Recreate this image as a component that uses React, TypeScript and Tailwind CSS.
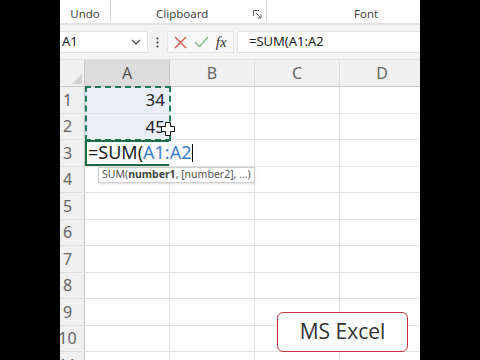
import React from 'react';

const rows = [1, 2, 3, 4, 5, 6, 7, 8, 9, 10, 11];
const cols = ['A', 'B', 'C', 'D'];

function Launcher() {
  return (
    <svg width="9" height="9" viewBox="0 0 9 9" fill="none" stroke="#666" strokeWidth="1">
      <path d="M0.5 6V0.5H6" />
      <path d="M3 3L8 8M8 4.5V8H4.5" />
    </svg>
  );
}

function PlusCursor() {
  return (
    <svg width="14" height="14" viewBox="0 0 14 14">
      <path
        d="M4.5 0.5H9.5V4.5H13.5V9.5H9.5V13.5H4.5V9.5H0.5V4.5H4.5Z"
        fill="#fff"
        stroke="#111"
        strokeWidth="1"
      />
    </svg>
  );
}

export default function App() {
  return (
    <div className="flex w-[480px] h-[360px] bg-black overflow-hidden" style={{ fontFamily: '"Noto Sans", "Open Sans", sans-serif' }}>
      <div className="w-[60px] shrink-0 bg-black" />

      <div className="relative w-[360px] shrink-0 flex flex-col bg-white overflow-hidden">
        {/* Ribbon group labels */}
        <div className="flex h-[23px] shrink-0 text-[11.5px] text-[#444] bg-white">
          <div className="w-[50px] pt-[5px] text-center">Undo</div>
          <div className="w-px h-[21px] bg-[#dadada]" />
          <div className="w-[155px] pt-[5px] flex items-start">
            <span className="ml-[45px]">Clipboard</span>
            <span className="ml-auto mr-[4px] mt-[5px] flex"><Launcher /></span>
          </div>
          <div className="w-px h-[21px] bg-[#dadada]" />
          <div className="flex-1 pt-[5px] flex items-start">
            <span className="ml-[87px]">Font</span>
          </div>
        </div>
        <div className="h-[2px] shrink-0 bg-[#e2e2e2]" />

        {/* Formula bar */}
        <div className="flex h-[35px] shrink-0 items-center bg-[#f3f3f3] border-b border-[#e0e0e0]">
          <div className="w-[88px] h-[22px] bg-white border border-l-0 border-[#e3e3e3] flex items-center pl-[2px] pr-[6px] text-[13px] text-[#222]">
            <span>A1</span>
            <svg className="ml-auto" width="10" height="6" viewBox="0 0 10 6" fill="none" stroke="#555" strokeWidth="1.3">
              <path d="M1 1L5 5L9 1" />
            </svg>
          </div>
          <div className="w-[19px] flex justify-center">
            <svg width="3" height="11" viewBox="0 0 3 11" fill="#444">
              <circle cx="1.5" cy="1.5" r="1.1" />
              <circle cx="1.5" cy="5.5" r="1.1" />
              <circle cx="1.5" cy="9.5" r="1.1" />
            </svg>
          </div>
          <div className="w-[67px] h-[22px] bg-[#f8f8f8] border border-[#e6e6e6] flex items-center justify-around px-[3px]">
            <svg width="13" height="13" viewBox="0 0 13 13" fill="none" stroke="#e0574f" strokeWidth="1.4">
              <path d="M1 1L12 12M12 1L1 12" />
            </svg>
            <svg width="15" height="12" viewBox="0 0 15 12" fill="none" stroke="#7fba8e" strokeWidth="1.4">
              <path d="M1 6L5.5 10.5L14 1" />
            </svg>
            <span className="text-[15px] italic text-[#333]" style={{ fontFamily: '"Liberation Serif", serif' }}>fx</span>
          </div>
          <div className="ml-[3px] flex-1 h-[22px] bg-white border border-r-0 border-[#e3e3e3] flex items-center pl-[11px] text-[13px] text-[#222]">
            =SUM(A1:A2
          </div>
        </div>

        {/* Column headers */}
        <div className="flex h-[27px] shrink-0 bg-[#f0f0f0] border-b border-[#c9c9c9] text-[16px] text-[#666]">
          <div className="w-[25px] shrink-0 border-r border-[#c9c9c9] flex items-end justify-end p-[2px]">
            <svg width="10" height="10" viewBox="0 0 10 10"><path d="M10 0V10H0Z" fill="#d2d2d2" /></svg>
          </div>
          {cols.map((c) => (
            <div
              key={c}
              className={
                c === 'A'
                  ? 'w-[85px] shrink-0 flex items-center justify-center bg-[#dcdcdc] border-r border-[#c9c9c9] text-[#555]'
                  : 'w-[85px] shrink-0 flex items-center justify-center border-r border-[#dedede]'
              }
            >
              {c}
            </div>
          ))}
        </div>

        {/* Grid rows */}
        {rows.map((r) => (
          <div key={r} className="flex h-[26.5px] shrink-0 border-b border-[#e1e1e1]">
            <div className="w-[25px] shrink-0 bg-[#f0f0f0] border-r border-[#c9c9c9] pr-[9px] flex items-center justify-center text-[16px] text-[#666] whitespace-nowrap">
              {r}
            </div>
            {cols.map((c) => {
              const sel = c === 'A' && (r === 1 || r === 2);
              return (
                <div
                  key={c}
                  className={
                    sel
                      ? 'w-[85px] shrink-0 border-r border-[#e1e1e1] bg-[#e9eef8] flex items-center justify-end pr-[4px] text-[17px] text-[#222]'
                      : 'w-[85px] shrink-0 border-r border-[#e1e1e1] flex items-center'
                  }
                >
                  {sel ? (r === 1 ? '34' : '45') : null}
                  {c === 'A' && r === 3 ? (
                    <div className="relative z-10 h-full w-full border-2 border-[#1d6b47] flex items-center">
                      <div className="flex items-center h-[22px] bg-white pl-[1px] pr-[1px] text-[18px] whitespace-nowrap text-[#222]">
                        <span>=SUM(</span>
                        <span className="text-[#3f7dc4]">A1:A2</span>
                        <span className="ml-[1px] w-px h-[18px] bg-[#111]" />
                      </div>
                    </div>
                  ) : null}
                </div>
              );
            })}
          </div>
        ))}

        {/* Copy range marquee */}
        <div className="absolute left-[25px] top-[86px] w-[86px] h-[55px] border-2 border-dashed border-[#217a55] pointer-events-none" />

        {/* Mouse cursor */}
        <div className="absolute left-[101px] top-[122px]">
          <PlusCursor />
        </div>

        {/* Function tooltip */}
        <div className="absolute left-[38px] top-[167px] h-[16px] px-[3px] flex items-center bg-white border border-[#cfcfcf] shadow-sm text-[10.5px] text-[#555] whitespace-nowrap z-20">
          SUM(<b className="text-[#444]">number1</b>, [number2], ...)
        </div>

        {/* Overlay caption */}
        <div
          className="absolute left-[217px] top-[312px] w-[131px] h-[40px] rounded-[6px] border border-[#c3343d] bg-white flex items-center justify-center text-[21px] text-[#333] z-20"
          style={{ fontFamily: '"Open Sans", sans-serif' }}
        >
          MS Excel
        </div>
      </div>

      <div className="w-[60px] shrink-0 bg-black" />
    </div>
  );
}
